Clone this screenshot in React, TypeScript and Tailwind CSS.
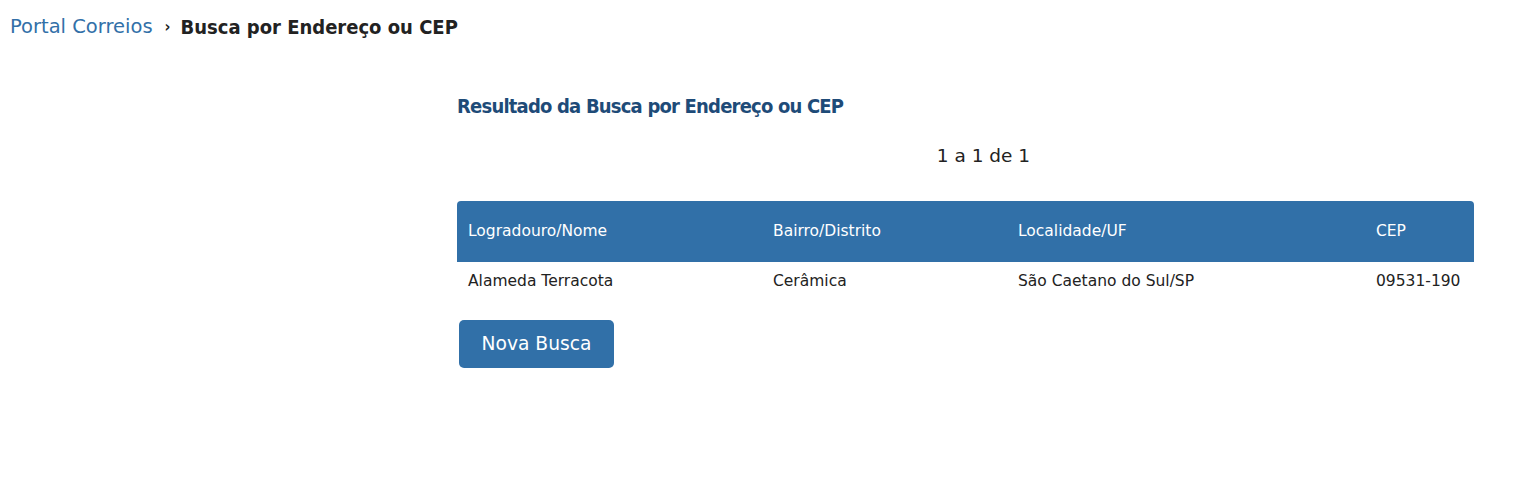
const font = { fontFamily: '"DejaVu Sans", sans-serif' }
const condensada = { fontFamily: '"DejaVu Sans Condensed", "DejaVu Sans", sans-serif' }

const colunas = ['Logradouro/Nome', 'Bairro/Distrito', 'Localidade/UF', 'CEP']
const resultado = ['Alameda Terracota', 'Cerâmica', 'São Caetano do Sul/SP', '09531-190']
const larguras = ['w-[305px]', 'w-[245px]', 'w-[358px]', 'flex-1']

export default function App() {
  return (
    <div className="min-h-[483px] bg-white text-[#222]" style={font}>
      <nav className="flex items-center h-[54px] pl-[10px] text-[19.5px]">
        <a href="#" className="text-[#3270a8]">Portal Correios</a>
        <span className="ml-[12px] mr-[10px] text-[16px] font-bold" style={condensada}>›</span>
        <span className="font-bold text-[20px]" style={condensada}>Busca por Endereço ou CEP</span>
      </nav>

      <main className="ml-[457px] w-[1053px]">
        <h1 className="mt-[38px] text-[20px] font-bold tracking-[-0.8px] text-[#1e4b78] leading-[28px]" style={condensada}>
          Resultado da Busca por Endereço ou CEP
        </h1>
        <p className="mt-[25px] text-center text-[18.5px] leading-[22px]">
          1 a 1 de 1
        </p>

        <div className="mt-[34px] w-[1017px] text-[15.5px]">
          <div className="flex items-center h-[61px] rounded-t-[4px] bg-[#3170a8] text-white">
            {colunas.map((c, i) => (
              <div key={c} className={`${larguras[i]} pl-[11px]`}>{c}</div>
            ))}
          </div>
          <div className="flex items-center h-[39px]">
            {resultado.map((c, i) => (
              <div key={c} className={`${larguras[i]} pl-[11px]`}>{c}</div>
            ))}
          </div>
        </div>

        <button className="mt-[19px] ml-[2px] w-[155px] h-[48px] rounded-[5px] bg-[#3170a8] text-white text-[18.7px]">
          Nova Busca
        </button>
      </main>
    </div>
  )
}
